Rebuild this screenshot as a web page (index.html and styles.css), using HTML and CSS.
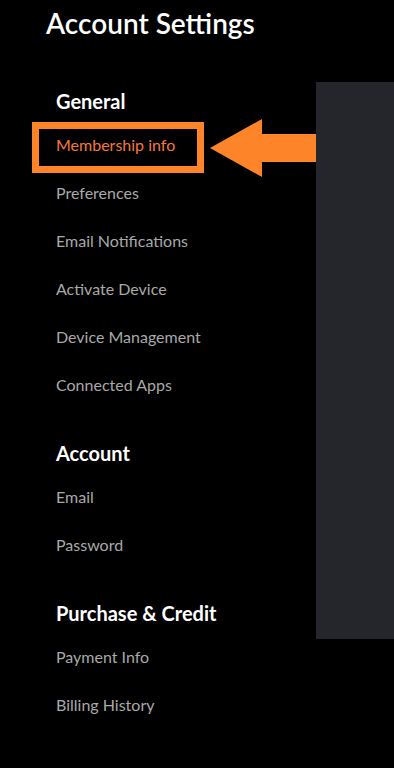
FILE: index.html
```html
<!DOCTYPE html>
<html lang="en">
<head>
<meta charset="utf-8">
<link rel="stylesheet" href="styles.css">
</head>
<body>
<div class="page">
  <aside class="sidebar">
    <h1 class="title">Account Settings</h1>
    <nav class="nav">
      <section class="group">
        <h2 class="group-title">General</h2>
        <a class="item active">Membership info
          <span class="highlight-box"></span>
          <svg class="arrow" width="106" height="58" viewBox="0 0 106 58"><polygon points="0,29 52,0 52,15 106,15 106,43 52,43 52,58" fill="#fe8429"/></svg>
        </a>
        <a class="item">Preferences</a>
        <a class="item">Email Notifications</a>
        <a class="item">Activate Device</a>
        <a class="item">Device Management</a>
        <a class="item">Connected Apps</a>
      </section>
      <section class="group">
        <h2 class="group-title">Account</h2>
        <a class="item">Email</a>
        <a class="item">Password</a>
      </section>
      <section class="group">
        <h2 class="group-title">Purchase &amp; Credit</h2>
        <a class="item">Payment Info</a>
        <a class="item">Billing History</a>
      </section>
    </nav>
  </aside>
  <main class="content"></main>
</div>
</body>
</html>
```

FILE: styles.css
```css
html, body {
  margin: 0;
  padding: 0;
  background: #000;
}
body {
  font-family: Lato, "Open Sans", sans-serif;
  color: #fff;
  height: 768px;
  overflow: hidden;
}
.page {
  display: flex;
  align-items: flex-start;
}
.sidebar {
  width: 316px;
  flex: none;
}
.title {
  margin: 7px 0 0 46px;
  font-size: 28px;
  line-height: 32px;
  font-weight: 600;
  color: #fff;
}
.nav {
  margin-top: 50px;
  padding-left: 56px;
  display: flex;
  flex-direction: column;
}
.group {
  display: flex;
  flex-direction: column;
}
.group + .group {
  margin-top: 32px;
}
.group-title {
  margin: 0 0 8px;
  font-size: 20px;
  line-height: 24px;
  font-weight: 700;
  color: #fff;
}
.item {
  position: relative;
  display: block;
  height: 48px;
  line-height: 48px;
  font-size: 16px;
  color: #a9a9a9;
  text-decoration: none;
}
.item.active {
  color: #f5793b;
}
.highlight-box {
  position: absolute;
  left: -24px;
  top: 1px;
  width: 172px;
  height: 51px;
  box-sizing: border-box;
  border: 7px solid #fe8429;
}
.arrow {
  position: absolute;
  left: 154px;
  top: -2px;
}
.content {
  flex: 1;
  margin-top: 82px;
  height: 557px;
  background: #25262b;
}
```
